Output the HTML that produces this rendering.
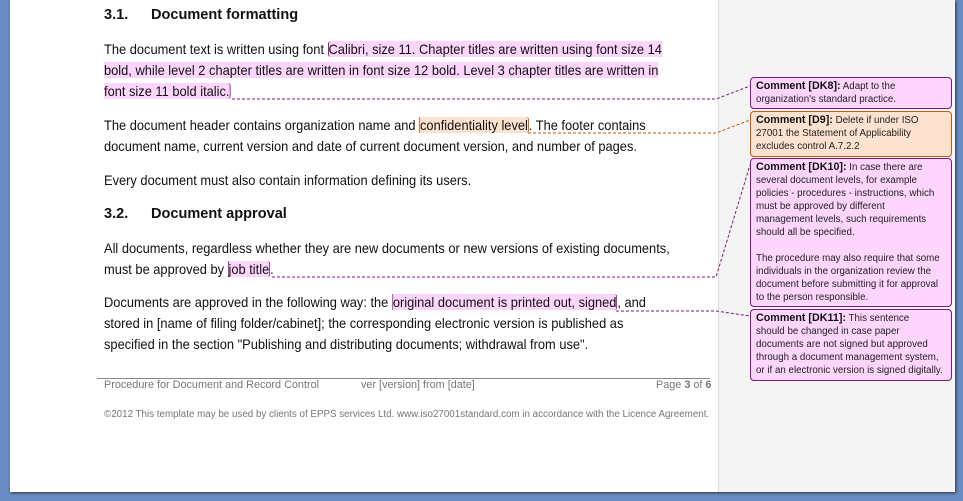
<!DOCTYPE html>
<html><head><meta charset="utf-8"><style>
*{margin:0;padding:0;box-sizing:border-box}
body{width:963px;height:501px;overflow:hidden;background:#6a8cc4;font-family:"Liberation Sans",sans-serif;position:relative}
.page{position:absolute;left:10px;top:0;width:945px;height:492px;background:#fff;box-shadow:1px 1px 3px #333}
.pane{position:absolute;left:718px;top:0;width:237px;height:492px;background:#f4f4f4;border-left:1px solid #ddd}
.l{position:absolute;white-space:nowrap;font-size:14px;color:#111;transform:scaleX(0.918);transform-origin:0 50%;line-height:19px}
.h{position:absolute;white-space:nowrap;font-size:15px;font-weight:bold;color:#111;transform:scaleX(0.97);transform-origin:0 50%}
.p{background:#fdd5fd}
.o{background:#fde3cf}
.bl{border-left:1px solid #7d1a7d;border-radius:3px 0 0 3px}
.br{border-right:1px solid #7d1a7d;border-radius:0 3px 3px 0}
.o.bl{border-left-color:#c05a10}.o.br{border-right-color:#c05a10}
.c{position:absolute;left:750px;width:202px;border:1px solid #7d1a7d;border-radius:4px;background:#fdd5fd;padding:2px 0 0 5px;font-size:10px;line-height:13px;color:#222}
.c div{white-space:nowrap;transform:scaleX(0.975);transform-origin:0 50%}
.c b{font-size:11px;color:#111}
.f{position:absolute;white-space:nowrap;font-size:11px;color:#777;transform:scaleX(0.985);transform-origin:0 50%}
</style></head><body>
<div class="page"></div>
<div class="pane"></div>
<div class="h" style="left:104px;top:6px">3.1.</div>
<div class="h" style="left:151px;top:6px">Document formatting</div>
<div class="l" style="left:104px;top:40px">The document text is written using font <span class="p bl">Calibri, size 11. Chapter titles are written using font size 14</span></div>
<div class="l" style="left:104px;top:61px"><span class="p">bold, while level 2 chapter titles are written in font size 12 bold. Level 3 chapter titles are written in</span></div>
<div class="l" style="left:104px;top:82px"><span class="p br">font size 11 bold italic.</span></div>
<div class="l" style="left:104px;top:116px">The document header contains organization name and <span class="o bl br">confidentiality level</span>. The footer contains</div>
<div class="l" style="left:104px;top:137px">document name, current version and date of current document version, and number of pages.</div>
<div class="l" style="left:104px;top:171px">Every document must also contain information defining its users.</div>
<div class="h" style="left:104px;top:205px">3.2.</div>
<div class="h" style="left:151px;top:205px">Document approval</div>
<div class="l" style="left:104px;top:239px">All documents, regardless whether they are new documents or new versions of existing documents,</div>
<div class="l" style="left:104px;top:260px">must be approved by <span class="p bl br">job title</span>.</div>
<div class="l" style="left:104px;top:293px">Documents are approved in the following way: the <span class="p bl br">original document is printed out, signed</span>, and</div>
<div class="l" style="left:104px;top:314px">stored in [name of filing folder/cabinet]; the corresponding electronic version is published as</div>
<div class="l" style="left:104px;top:335px">specified in the section "Publishing and distributing documents; withdrawal from use".</div>
<div style="position:absolute;left:97px;top:378px;width:613px;height:1px;background:#888"></div>
<div class="f" style="left:104px;top:379px">Procedure for Document and Record Control</div>
<div class="f" style="left:361px;top:379px">ver [version] from [date]</div>
<div class="f" style="left:656px;top:379px">Page <b>3</b> of <b>6</b></div>
<div class="f" style="left:104px;top:409px;font-size:10px;transform:scaleX(0.98)">©2012 This template may be used by clients of EPPS services Ltd. www.iso27001standard.com in accordance with the Licence Agreement.</div>
<svg style="position:absolute;left:0;top:0" width="963" height="501">
<g fill="none" stroke-width="1" stroke-dasharray="3,2">
<path d="M232 99 H716 L750 86" stroke="#7d1a7d"/>
<path d="M528 133 H716 L750 120" stroke="#c05a10"/>
<path d="M272 277 H716 L750 165" stroke="#7d1a7d"/>
<path d="M616 311 H716 L750 316" stroke="#7d1a7d"/>
</g>
</svg>
<div class="c" style="top:77px;height:32px"><div><b>Comment [DK8]:</b> Adapt to the</div><div>organization's standard practice.</div></div>
<div class="c" style="top:111px;height:46px;background:#fde3cf;border-color:#c05a10"><div><b>Comment [D9]:</b> Delete if under ISO</div><div>27001 the Statement of Applicability</div><div>excludes control A.7.2.2</div></div>
<div class="c" style="top:158px;height:149px"><div><b>Comment [DK10]:</b> In case there are</div><div>several document levels, for example</div><div>policies - procedures - instructions, which</div><div>must be approved by different</div><div>management levels, such requirements</div><div>should all be specified.</div><div>&nbsp;</div><div>The procedure may also require that some</div><div>individuals in the organization review the</div><div>document before submitting it for approval</div><div>to the person responsible.</div></div>
<div class="c" style="top:309px;height:72px"><div><b>Comment [DK11]:</b> This sentence</div><div>should be changed in case paper</div><div>documents are not signed but approved</div><div>through a document management system,</div><div>or if an electronic version is signed digitally.</div></div>
</body></html>
